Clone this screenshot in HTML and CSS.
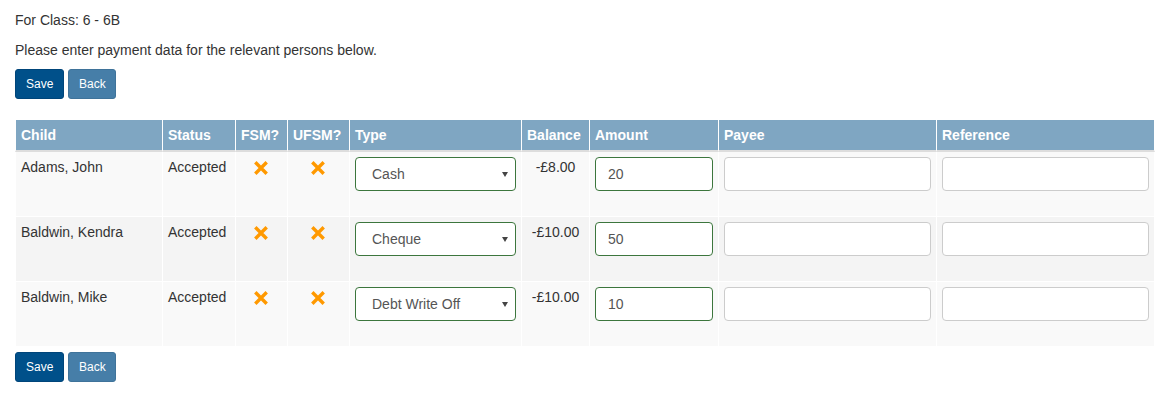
FILE: index.html
```html
<!DOCTYPE html>
<html lang="en">
<head>
<meta charset="utf-8">
<title>Payments</title>
<link rel="stylesheet" href="styles.css">
</head>
<body>
<div class="page">
  <p class="intro first">For Class: 6 - 6B</p>
  <p class="intro second">Please enter payment data for the relevant persons below.</p>
  <div class="actions top">
    <button class="btn btn-save" type="button">Save</button>
    <button class="btn btn-back" type="button">Back</button>
  </div>
  <table class="grid">
    <colgroup>
      <col class="c-child"><col class="c-status"><col class="c-fsm"><col class="c-ufsm"><col class="c-type"><col class="c-bal"><col class="c-amt"><col class="c-payee"><col class="c-ref">
    </colgroup>
    <thead>
      <tr>
        <th>Child</th><th>Status</th><th>FSM?</th><th>UFSM?</th><th>Type</th><th>Balance</th><th>Amount</th><th>Payee</th><th class="last">Reference</th>
      </tr>
    </thead>
    <tbody>
      <tr class="odd">
        <td>Adams, John</td>
        <td>Accepted</td>
        <td class="center"><svg class="cross" viewBox="0 0 14 14" width="14" height="14"><path d="M1.3 1.3 L12.7 12.7 M12.7 1.3 L1.3 12.7"/></svg></td>
        <td class="center"><svg class="cross" viewBox="0 0 14 14" width="14" height="14"><path d="M1.3 1.3 L12.7 12.7 M12.7 1.3 L1.3 12.7"/></svg></td>
        <td><div class="select ok"><span>Cash</span></div></td>
        <td class="center">-£8.00</td>
        <td><div class="field ok">20</div></td>
        <td><div class="field"></div></td>
        <td class="last"><div class="field"></div></td>
      </tr>
      <tr class="even">
        <td>Baldwin, Kendra</td>
        <td>Accepted</td>
        <td class="center"><svg class="cross" viewBox="0 0 14 14" width="14" height="14"><path d="M1.3 1.3 L12.7 12.7 M12.7 1.3 L1.3 12.7"/></svg></td>
        <td class="center"><svg class="cross" viewBox="0 0 14 14" width="14" height="14"><path d="M1.3 1.3 L12.7 12.7 M12.7 1.3 L1.3 12.7"/></svg></td>
        <td><div class="select ok"><span>Cheque</span></div></td>
        <td class="center">-£10.00</td>
        <td><div class="field ok">50</div></td>
        <td><div class="field"></div></td>
        <td class="last"><div class="field"></div></td>
      </tr>
      <tr class="odd">
        <td>Baldwin, Mike</td>
        <td>Accepted</td>
        <td class="center"><svg class="cross" viewBox="0 0 14 14" width="14" height="14"><path d="M1.3 1.3 L12.7 12.7 M12.7 1.3 L1.3 12.7"/></svg></td>
        <td class="center"><svg class="cross" viewBox="0 0 14 14" width="14" height="14"><path d="M1.3 1.3 L12.7 12.7 M12.7 1.3 L1.3 12.7"/></svg></td>
        <td><div class="select ok"><span>Debt Write Off</span></div></td>
        <td class="center">-£10.00</td>
        <td><div class="field ok">10</div></td>
        <td><div class="field"></div></td>
        <td class="last"><div class="field"></div></td>
      </tr>
    </tbody>
  </table>
  <div class="actions bottom">
    <button class="btn btn-save" type="button">Save</button>
    <button class="btn btn-back" type="button">Back</button>
  </div>
</div>
</body>
</html>
```

FILE: styles.css
```css
* { box-sizing: border-box; }

html, body {
  margin: 0;
  padding: 0;
  background: #fff;
}

body {
  font-family: "Liberation Sans", Arial, sans-serif;
  font-size: 14px;
  line-height: 20px;
  color: #333;
}

.page {
  padding: 10px 15px 0 15px;
}

.intro {
  font-size: 14px;
  line-height: 20px;
  margin: 0 0 10px 0;
}

.intro.second {
  margin-bottom: 9px;
}

.actions {
  display: flex;
  gap: 4px;
}

.actions.top {
  margin-bottom: 21px;
}

.actions.bottom {
  margin-top: 6px;
}

.btn {
  font-family: "Liberation Sans", Arial, sans-serif;
  font-size: 12px;
  line-height: 18px;
  padding: 5px 10px;
  height: 30px;
  border-radius: 3px;
  color: #fff;
  cursor: pointer;
}

.btn-save {
  background: #00508a;
  border: 1px solid #00457a;
  width: 49px;
}

.btn-back {
  background: #467ea8;
  border: 1px solid #3f739a;
  width: 48px;
}

.grid {
  width: 1140px;
  table-layout: fixed;
  border-collapse: separate;
  border-spacing: 0;
}

.c-child { width: 147px; }
.c-status { width: 73px; }
.c-fsm { width: 52px; }
.c-ufsm { width: 62px; }
.c-type { width: 172px; }
.c-bal { width: 68px; }
.c-amt { width: 129px; }
.c-payee { width: 218px; }
.c-ref { width: 219px; }

.grid th {
  background: #7fa6c2;
  color: #fff;
  font-weight: bold;
  text-align: left;
  padding: 5px 5px;
  height: 32px;
  border-left: 1px solid #fff;
  border-bottom: 2px solid #ddd;
  white-space: nowrap;
}

.grid td {
  padding: 5px 5px;
  height: 64px;
  vertical-align: top;
  border-left: 1px solid #fff;
  white-space: nowrap;
}

.grid th.last,
.grid td.last {
  border-right: 1px solid #fff;
}

.grid tbody tr + tr td {
  border-top: 1px solid #fff;
  height: 65px;
}

.grid tr.odd td { background: #f9f9f9; }
.grid tr.even td { background: #f4f4f4; }

.grid td.center { text-align: center; }

.cross {
  display: block;
  margin: 4px auto 0 auto;
  position: relative;
  left: -1px;
}

.cross path {
  stroke: #ff9900;
  stroke-width: 3.4;
  fill: none;
}

.select,
.field {
  height: 34px;
  width: 100%;
  background: #fff;
  border: 1px solid #ccc;
  border-radius: 4px;
  font-size: 14px;
  line-height: 20px;
  color: #555;
  padding: 6px 12px;
}

.ok {
  border-color: #3c763d;
}

.select {
  position: relative;
  padding-left: 16px;
}

.select::after {
  content: "";
  position: absolute;
  right: 7px;
  top: 14px;
  width: 0;
  height: 0;
  border-left: 3.5px solid transparent;
  border-right: 3.5px solid transparent;
  border-top: 5px solid #444;
}
```
